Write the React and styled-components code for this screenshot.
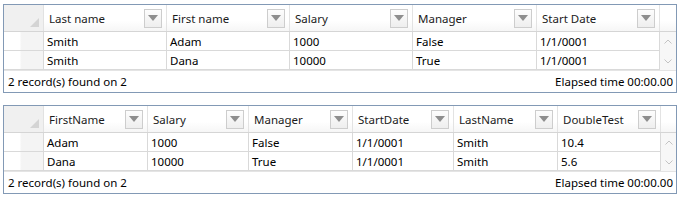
import styled, { createGlobalStyle } from "styled-components";

const GlobalStyle = createGlobalStyle`
  body {
    margin: 0;
    background: #ffffff;
    font-family: "Noto Sans", "Open Sans", sans-serif;
  }
`;

const firstGrid = {
  columns: [
    { key: "last", label: "Last name", width: 123 },
    { key: "first", label: "First name", width: 123 },
    { key: "salary", label: "Salary", width: 123 },
    { key: "manager", label: "Manager", width: 124 },
    { key: "start", label: "Start Date", width: 123 },
  ],
  rows: [
    { last: "Smith", first: "Adam", salary: "1000", manager: "False", start: "1/1/0001" },
    { last: "Smith", first: "Dana", salary: "10000", manager: "True", start: "1/1/0001" },
  ],
};

const secondGrid = {
  columns: [
    { key: "first", label: "FirstName", width: 104 },
    { key: "salary", label: "Salary", width: 101 },
    { key: "manager", label: "Manager", width: 104 },
    { key: "start", label: "StartDate", width: 101 },
    { key: "last", label: "LastName", width: 104 },
    { key: "dbl", label: "DoubleTest", width: 103 },
  ],
  rows: [
    { first: "Adam", salary: "1000", manager: "False", start: "1/1/0001", last: "Smith", dbl: "10.4" },
    { first: "Dana", salary: "10000", manager: "True", start: "1/1/0001", last: "Smith", dbl: "5.6" },
  ],
};

const DataGrid = ({ columns, rows }) => {
  const template = `40px ${columns.map((c) => `${c.width}px`).join(" ")} 1fr`;

  return (
    <Frame>
      <HeaderRow $template={template}>
        <Corner />
        {columns.map((col) => (
          <HeaderCell key={col.key}>
            <span>{col.label}</span>
            <FilterButton>
              <Arrow />
            </FilterButton>
          </HeaderCell>
        ))}
        <HeaderFiller />
      </HeaderRow>

      <Body $template={template}>
        {rows.map((row, i) => (
          <Row key={i}>
            <RowHead />
            {columns.map((col) => (
              <Cell key={col.key}>{row[col.key]}</Cell>
            ))}
          </Row>
        ))}
        <ScrollBar $rows={rows.length}>
          <Chevron viewBox="0 0 8 5">
            <path d="M0.5 4.5 L4 1 L7.5 4.5" />
          </Chevron>
          <Chevron viewBox="0 0 8 5">
            <path d="M0.5 0.5 L4 4 L7.5 0.5" />
          </Chevron>
        </ScrollBar>
      </Body>

      <Footer>
        <span>2 record(s) found on 2</span>
        <span>Elapsed time 00:00.00</span>
      </Footer>
    </Frame>
  );
};

export default function App() {
  return (
    <>
      <GlobalStyle />
      <Page>
        <DataGrid {...firstGrid} />
        <DataGrid {...secondGrid} />
      </Page>
    </>
  );
}

const Page = styled.div`
  display: flex;
  flex-direction: column;
  gap: 12px;
  padding: 4px 0 0 3px;
  width: 674px;
`;

const Frame = styled.div`
  border: 1px solid #8299b5;
  background: #ffffff;
  display: flex;
  flex-direction: column;
  font-size: 11.5px;
  color: #000000;
`;

const HeaderRow = styled.div`
  display: grid;
  grid-template-columns: ${(p) => p.$template};
  height: 27px;
  border-bottom: 1px solid #d5d5d5;
  box-sizing: border-box;
  background: linear-gradient(#ffffff, #ffffff 60%, #f6f6f6);
`;

const Corner = styled.div`
  position: relative;
  background: #f0f0f0;
  border-right: 1px solid #e2e2e2;

  &::after {
    content: "";
    position: absolute;
    right: 4px;
    bottom: 4px;
    width: 0;
    height: 0;
    border-style: solid;
    border-width: 0 0 9px 9px;
    border-color: transparent transparent #d4d4d4 transparent;
  }
`;

const HeaderCell = styled.div`
  display: flex;
  align-items: center;
  justify-content: space-between;
  padding: 0 4px 0 5px;
  border-right: 1px solid #e3e3e3;
  color: #1b1b1b;
  overflow: hidden;
  white-space: nowrap;
`;

const HeaderFiller = styled.div``;

const FilterButton = styled.div`
  width: 18px;
  height: 19px;
  box-sizing: border-box;
  border: 1px solid #cdcdcd;
  background: linear-gradient(#fdfdfd, #eeeeee);
  display: flex;
  align-items: center;
  justify-content: center;
  flex-shrink: 0;
`;

const Arrow = styled.div`
  width: 0;
  height: 0;
  border-style: solid;
  border-width: 6px 5px 0 5px;
  border-color: #8e8e8e transparent transparent transparent;
`;

const Body = styled.div`
  display: grid;
  grid-template-columns: ${(p) => p.$template};
  grid-auto-rows: 19px;
`;

const Row = styled.div`
  display: contents;

  & > div {
    border-bottom: 1px solid #d9d9d9;
  }
`;

const RowHead = styled.div`
  box-sizing: border-box;
  background: linear-gradient(to right, #ffffff 40%, #f4f4f4 45%);
  border-right: 1px solid #d9d9d9;
`;

const Cell = styled.div`
  box-sizing: border-box;
  padding: 0 3px;
  display: flex;
  align-items: center;
  border-right: 1px solid #d9d9d9;
  white-space: nowrap;
  overflow: hidden;
`;

const ScrollBar = styled.div`
  grid-column: -2 / -1;
  grid-row: 1 / span ${(p) => p.$rows};
  background: #f7f7f7;
  display: flex;
  flex-direction: column;
  align-items: center;
  justify-content: space-between;
  padding: 7px 0 6px;
`;

const Chevron = styled.svg`
  width: 8px;
  height: 5px;
  fill: none;
  stroke: #c3c3c3;
  stroke-width: 1;
`;

const Footer = styled.div`
  height: 22px;
  box-sizing: border-box;
  border-top: 1px solid #e4e4e4;
  display: flex;
  align-items: center;
  justify-content: space-between;
  padding: 0 3px 1px 4px;
  color: #000000;
`;
